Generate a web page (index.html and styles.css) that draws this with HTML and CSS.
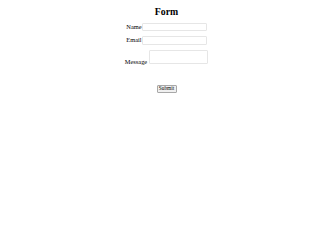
FILE: index.html
```html
<!DOCTYPE html>
<html>
<head>
<meta charset="utf-8">
<link rel="stylesheet" href="styles.css">
</head>
<body>
<h2 class="title">Form</h2>
<form class="form">
  <div class="row">
    <label class="label" for="name">Name</label><input class="field" id="name" type="text">
  </div>
  <div class="row">
    <label class="label" for="email">Email</label><input class="field" id="email" type="email">
  </div>
  <div class="row">
    <label class="label label-msg" for="message">Message</label><textarea class="area" id="message"></textarea>
  </div>
  <div class="row row-submit">
    <button class="submit" type="submit">Submit</button>
  </div>
</form>
</body>
</html>
```
FILE: styles.css
```css
html, body {
  margin: 0;
  padding: 0;
  background: #fff;
}
body {
  font-family: "Liberation Serif", "Times New Roman", serif;
  font-size: 6.4px;
  color: #000;
}
.title {
  font-size: 9.8px;
  font-weight: bold;
  text-align: center;
  margin: 5.5px 0 6px;
  line-height: 11px;
}
.form {
  display: flex;
  flex-direction: column;
  align-items: center;
}
.row {
  text-align: center;
  margin-bottom: 5.6px;
  line-height: 8px;
}
.label {
  font-size: 6.4px;
}
.label-msg {
  margin-right: 1.5px;
}
.field {
  box-sizing: border-box;
  width: 65px;
  height: 8.4px;
  border: 1px solid #e6e6e6;
  border-radius: 1px;
  padding: 0 1px;
  margin: 0;
  font-size: 5.3px;
  vertical-align: baseline;
}
.area {
  box-sizing: border-box;
  width: 59.5px;
  height: 13.4px;
  border: 1px solid #e6e6e6;
  border-radius: 1px;
  padding: 1px;
  margin: 0;
  font-size: 5.3px;
  resize: none;
  vertical-align: baseline;
}
.row-submit {
  margin-top: 13px;
}
.submit {
  box-sizing: border-box;
  height: 7.4px;
  width: 20px;
  padding: 0;
  border: 1px solid #a8a8a8;
  border-radius: 1px;
  background: #f0f0f0;
  font-family: "Liberation Serif", serif;
  font-size: 5.3px;
  line-height: 5px;
  color: #000;
}
```
